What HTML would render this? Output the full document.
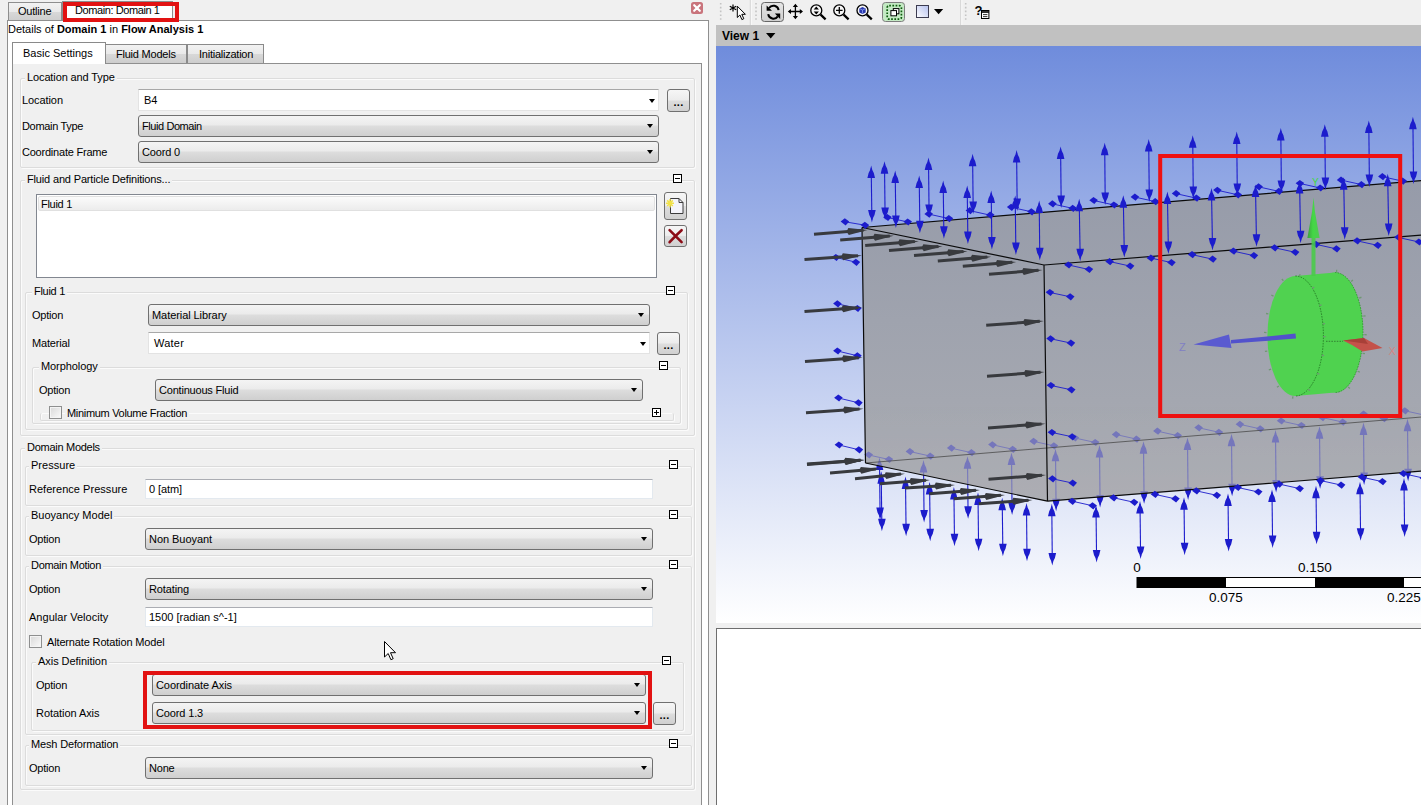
<!DOCTYPE html>
<html><head><meta charset="utf-8"><title>Domain 1</title>
<style>
html,body{margin:0;padding:0}
body{width:1421px;height:805px;overflow:hidden;background:#f0f0f0;position:relative;font-family:"Liberation Sans",sans-serif;font-size:11px;color:#000}
.a{position:absolute;box-sizing:border-box}
.t{position:absolute;white-space:nowrap;line-height:13px;height:13px}
.cb{position:absolute;box-sizing:border-box;height:22px;border:1px solid #707070;border-radius:3px;background:linear-gradient(#f4f4f4 0,#ebebeb 45%,#dddddd 50%,#cfcfcf 100%);padding:0 0 0 3px;line-height:20px;white-space:nowrap}
.cb:after,.ce:after{content:"";position:absolute;right:5px;top:8px;border:3.6px solid transparent;border-top:4.2px solid #000;border-bottom:0}
.ce:after{right:3.5px;top:9px}
.ce{position:absolute;box-sizing:border-box;height:22px;border:1px solid #e3e3e3;border-top-color:#a8a8a8;background:#fff;padding:0 0 0 5px;line-height:20px;white-space:nowrap}
.in{position:absolute;box-sizing:border-box;height:20px;border:1px solid #e3e9ef;border-top-color:#abadb3;background:#fff;padding:0 0 0 3px;line-height:18px;white-space:nowrap}
.bt{position:absolute;box-sizing:border-box;border:1px solid #707070;border-radius:3px;background:linear-gradient(#f6f6f6 0,#ececec 48%,#dddddd 52%,#d0d0d0 100%);text-align:center;line-height:24px;font-weight:bold;letter-spacing:0.3px}
.gb{position:absolute;box-sizing:border-box;border:1px solid #dcdcdc;box-shadow:1px 1px 0 #fbfbfb inset, 1px 1px 0 #fbfbfb;border-radius:2px}
.gl{position:absolute;white-space:nowrap;line-height:13px;height:13px;background:#f0f0f0;padding:0 2px}
.ic{position:absolute;box-sizing:border-box;width:9px;height:9px;border:1px solid #000;background:#fff;margin-left:1px}
.ic:before{content:"";position:absolute;left:1px;top:2.7px;width:5px;height:1.6px;background:#000}
.ic.p:after{content:"";position:absolute;left:2.7px;top:1px;width:1.6px;height:5px;background:#000}
.ck{position:absolute;box-sizing:border-box;width:13px;height:13px;border:1px solid #8e8f8f;background:linear-gradient(135deg,#d8d8d8,#fafafa);box-shadow:0 0 0 1px #f4f4f4 inset}
</style></head><body>
<!-- LEFT PANEL -->
<div id="left">
<div class="a" style="left:8px;top:2px;width:54px;height:19px;border:1px solid #8e8e8e;border-bottom:0;background:linear-gradient(#f2f2f2 0,#e9e9e9 50%,#d8d8d8 52%,#cdcdcd 100%)"></div>
<div class="t" style="left:18px;top:5px;letter-spacing:-0.21px">Outline</div>
<div class="a" style="left:7px;top:20px;width:702px;height:800px;border:1px solid #8f8f8f;background:#fff"></div>
<div class="a" style="left:62px;top:1px;width:111px;height:20px;border:1px solid #8e8e8e;border-bottom:0;background:#fff"></div>
<div class="t" style="left:75px;top:4px;letter-spacing:-0.41px">Domain: Domain 1</div>
<div class="a" style="left:63px;top:2px;width:116px;height:20px;border:4px solid #e21212"></div>
<div class="t" style="left:8px;top:23px">Details of <b>Domain 1</b> in <b>Flow Analysis 1</b></div>
<!-- inner tabs -->
<div class="a" style="left:12px;top:63px;width:690px;height:760px;border:1px solid #8f8f8f;background:#f0f0f0"></div>
<div class="a" style="left:12px;top:42px;width:94px;height:22px;border:1px solid #8a8a8a;border-bottom:0;background:#fff"></div>
<div class="t" style="left:23px;top:47px">Basic Settings</div>
<div class="a" style="left:105px;top:44px;width:82px;height:19px;border:1px solid #8a8a8a;border-bottom:0;background:linear-gradient(#f2f2f2 0,#e9e9e9 50%,#d8d8d8 52%,#cdcdcd 100%)"></div>
<div class="t" style="left:116px;top:48px;letter-spacing:-0.22px">Fluid Models</div>
<div class="a" style="left:187px;top:44px;width:77px;height:19px;border:1px solid #8a8a8a;border-bottom:0;background:linear-gradient(#f2f2f2 0,#e9e9e9 50%,#d8d8d8 52%,#cdcdcd 100%)"></div>
<div class="t" style="left:199px;top:48px;letter-spacing:-0.24px">Initialization</div>

<!-- form content -->
<div id="form">
<div class="gb" style="left:20px;top:78px;width:675px;height:90px"></div>
<div class="gl" style="left:25px;top:71px;letter-spacing:-0.12px">Location and Type</div>
<div class="t" style="left:22px;top:94px;letter-spacing:-0.08px">Location</div>
<div class="ce" style="left:138px;top:89px;width:521px">B4</div>
<div class="bt" style="left:667px;top:89px;width:23px;height:23px">...</div>
<div class="t" style="left:22px;top:120px;letter-spacing:-0.33px">Domain Type</div>
<div class="cb" style="left:138px;top:115px;width:521px;letter-spacing:-0.42px">Fluid Domain</div>
<div class="t" style="left:22px;top:146px;letter-spacing:-0.22px">Coordinate Frame</div>
<div class="cb" style="left:138px;top:141px;width:521px;letter-spacing:-0.16px">Coord 0</div>

<div class="gb" style="left:20px;top:180px;width:675px;height:256px"></div>
<div class="gl" style="left:25px;top:173px;letter-spacing:-0.16px">Fluid and Particle Definitions...</div>
<div class="ic" style="left:672px;top:174px"></div>
<div class="a" style="left:36px;top:194px;width:621px;height:84px;border:1px solid #828790;background:#fff"></div>
<div class="a" style="left:38px;top:196px;width:617px;height:15px;border:1px solid #e0e0e0;border-radius:2px;background:linear-gradient(#fbfbfb,#ececec)"></div>
<div class="t" style="left:41px;top:198px;letter-spacing:-0.29px">Fluid 1</div>
<div class="bt" style="left:664px;top:192px;width:23px;height:28px"></div>
<div class="bt" style="left:664px;top:225px;width:23px;height:22px"></div>
<svg class="a" style="left:664px;top:192px" width="24" height="56" viewBox="664 192 24 56">
<path d="M670.5 198.5h8.5l4 4v11h-12.5z" fill="#f4f4fa" stroke="#3c3c3c" stroke-width="1"/><path d="M679 198.5v4h4" fill="none" stroke="#3c3c3c" stroke-width="1"/>
<path d="M670 199v8.4M666 203.2h8M667.2 200.4l5.6 5.6M672.8 200.4l-5.6 5.6" stroke="#f2e24a" stroke-width="1.5"/>
<path d="M669.6 230.2l12 12M681.6 230.2c-4 3.6-8 7.6-12 12" stroke="#8c0c16" stroke-width="2.6" stroke-linecap="round" fill="none"/>
</svg>
<svg class="a" style="left:383px;top:640px" width="16" height="22" viewBox="0 0 16 22"><path d="M1.5 1.5v15.5l3.7-3.5l2.7 6.2l2.3-1l-2.7-6h5z" fill="#fff" stroke="#000" stroke-width="1"/></svg>


<div class="gb" style="left:25px;top:292px;width:663px;height:138px"></div>
<div class="gl" style="left:32px;top:285px;letter-spacing:-0.29px">Fluid 1</div>
<div class="ic" style="left:665px;top:286px"></div>
<div class="t" style="left:32px;top:309px;letter-spacing:-0.23px">Option</div>
<div class="cb" style="left:148px;top:304px;width:502px;letter-spacing:-0.07px">Material Library</div>
<div class="t" style="left:32px;top:337px;letter-spacing:-0.17px">Material</div>
<div class="ce" style="left:148px;top:332px;width:502px;letter-spacing:0.22px">Water</div>
<div class="bt" style="left:657px;top:332px;width:23px;height:23px">...</div>

<div class="gb" style="left:32px;top:367px;width:649px;height:57px"></div>
<div class="gl" style="left:39px;top:360px;letter-spacing:-0.08px">Morphology</div>
<div class="ic" style="left:658px;top:361px"></div>
<div class="t" style="left:39px;top:384px;letter-spacing:-0.23px">Option</div>
<div class="cb" style="left:155px;top:379px;width:488px;letter-spacing:-0.2px">Continuous Fluid</div>
<div class="gb" style="left:40px;top:413px;width:634px;height:8px;border-top:0"></div>
<div class="ck" style="left:49px;top:406px"></div>
<div class="gl" style="left:65px;top:407px;letter-spacing:-0.31px">Minimum Volume Fraction</div>
<div class="ic p" style="left:651px;top:408px"></div>

<div class="gb" style="left:20px;top:448px;width:675px;height:342px"></div>
<div class="gl" style="left:25px;top:441px;letter-spacing:-0.28px">Domain Models</div>

<div class="gb" style="left:25px;top:466px;width:667px;height:40px"></div>
<div class="gl" style="left:29px;top:459px;letter-spacing:0.03px">Pressure</div>
<div class="ic" style="left:668px;top:460px"></div>
<div class="t" style="left:29px;top:483px;letter-spacing:0.03px">Reference Pressure</div>
<div class="in" style="left:145px;top:479px;width:508px;letter-spacing:-0.09px">0 [atm]</div>

<div class="gb" style="left:25px;top:516px;width:667px;height:40px"></div>
<div class="gl" style="left:29px;top:509px">Buoyancy Model</div>
<div class="ic" style="left:668px;top:510px"></div>
<div class="t" style="left:29px;top:533px;letter-spacing:-0.23px">Option</div>
<div class="cb" style="left:145px;top:528px;width:508px;letter-spacing:-0.05px">Non Buoyant</div>

<div class="gb" style="left:25px;top:566px;width:667px;height:169px"></div>
<div class="gl" style="left:29px;top:559px;letter-spacing:-0.31px">Domain Motion</div>
<div class="ic" style="left:668px;top:560px"></div>
<div class="t" style="left:29px;top:583px;letter-spacing:-0.23px">Option</div>
<div class="cb" style="left:145px;top:578px;width:508px;letter-spacing:-0.12px">Rotating</div>
<div class="t" style="left:29px;top:611px;letter-spacing:0.03px">Angular Velocity</div>
<div class="in" style="left:145px;top:607px;width:508px">1500 [radian s^-1]</div>
<div class="ck" style="left:29px;top:635px"></div>
<div class="t" style="left:47px;top:636px;letter-spacing:-0.15px">Alternate Rotation Model</div>

<div class="gb" style="left:31px;top:662px;width:653px;height:69px"></div>
<div class="gl" style="left:36px;top:655px;letter-spacing:-0.05px">Axis Definition</div>
<div class="ic" style="left:661px;top:656px"></div>
<div class="t" style="left:36px;top:679px;letter-spacing:-0.23px">Option</div>
<div class="cb" style="left:152px;top:674px;width:494px;letter-spacing:-0.07px">Coordinate Axis</div>
<div class="t" style="left:36px;top:707px;letter-spacing:-0.06px">Rotation Axis</div>
<div class="cb" style="left:152px;top:702px;width:494px;letter-spacing:-0.14px">Coord 1.3</div>
<div class="bt" style="left:653px;top:702px;width:23px;height:23px">...</div>
<div class="a" style="left:143px;top:671px;width:509px;height:58px;border:4px solid #e21212"></div>

<div class="gb" style="left:25px;top:745px;width:667px;height:41px"></div>
<div class="gl" style="left:29px;top:738px;letter-spacing:-0.16px">Mesh Deformation</div>
<div class="ic" style="left:668px;top:739px"></div>
<div class="t" style="left:29px;top:762px;letter-spacing:-0.23px">Option</div>
<div class="cb" style="left:145px;top:757px;width:508px;letter-spacing:-0.2px">None</div>
</div>
</div>
<!-- RIGHT -->
<div id="right">
<!--TOOLBAR-->
<svg class="a" style="left:690px;top:0" width="320" height="25" viewBox="690 0 320 25">
<defs><linearGradient id="tg1" x1="0" y1="0" x2="0" y2="1"><stop offset="0" stop-color="#e6e6e6"/><stop offset="1" stop-color="#cfcfcf"/></linearGradient>
<linearGradient id="tg2" x1="0" y1="1" x2="1" y2="0"><stop offset="0" stop-color="#ffffff"/><stop offset="1" stop-color="#b4c0ee"/></linearGradient></defs>
<!-- close -->
<rect x="691" y="2" width="12" height="12" rx="2.5" fill="#c9747c"/><path d="M694.2 5.2l5.6 5.6M699.8 5.2l-5.6 5.6" stroke="#fff" stroke-width="2.2" stroke-linecap="round"/>
<!-- handles -->
<path d="M720.7 3v18M756 3v18M965.7 3v18" stroke="#c4c4c4" stroke-width="1.6" stroke-dasharray="1.6 2.2"/>
<path d="M750.3 0v25M960.8 0v25" stroke="#cfcfcf" stroke-width="1"/><path d="M751.3 0v25M961.8 0v25" stroke="#fafafa" stroke-width="1"/>
<!-- select icon -->
<path d="M733 4.6v6.8M729.8 6.3l6.4 3.4M736.2 6.3l-6.4 3.4" stroke="#000" stroke-width="1.2"/>
<path d="M737.3 6.2v11.3l2.6-2.5l2 4.6l1.9-0.9l-2-4.4h3.6z" fill="#fff" stroke="#000" stroke-width="1"/>
<!-- rotate button -->
<rect x="761.5" y="2.5" width="22" height="19" rx="3" fill="url(#tg1)" stroke="#666" stroke-width="1"/>
<path d="M778.6 10.2a5.3 5.3 0 0 0 -9.6 -2.2" fill="none" stroke="#000" stroke-width="2"/><path d="M766.6 5.4v5.4h5.4z" fill="#000"/>
<path d="M768.2 14.2a5.3 5.3 0 0 0 9.6 2.2" fill="none" stroke="#000" stroke-width="2"/><path d="M780.2 19v-5.4h-5.4z" fill="#000"/>
<!-- move icon -->
<path d="M795.4 5.5v12M789.4 11.5h12" stroke="#000" stroke-width="1.3"/>
<path d="M795.4 3.8l2.6 3.2h-5.2zM795.4 19.2l2.6-3.2h-5.2zM787.8 11.5l3.2-2.6v5.2zM803 11.5l-3.2-2.6v5.2z" fill="#000"/>
<!-- zoom icons -->
<g fill="none" stroke="#000"><circle cx="816.3" cy="10.4" r="5.5" stroke-width="1.3" fill="#f6f6f6"/><path d="M820.6 14.6l5 4.8" stroke-width="2.2"/>
<circle cx="839.3" cy="10.4" r="5.5" stroke-width="1.3" fill="#f6f6f6"/><path d="M843.6 14.6l5 4.8" stroke-width="2.2"/>
<circle cx="862.5" cy="10.4" r="5.5" stroke-width="1.3" fill="#f6f6f6"/><path d="M866.8 14.6l5 4.8" stroke-width="2.2"/>
<path d="M836 10.4h6.6M839.3 7.1v6.6" stroke-width="1.3"/></g>
<path d="M816.3 6.6l2.6 3h-5.2zM816.3 14.4l2.6-3h-5.2z" fill="#000"/>
<path d="M859.3 8.6l3.2-1.6l3.2 1.6v3.8l-3.2 1.6l-3.2-1.6z" fill="#2a3ab0"/><path d="M859.9 8.8l2.6 1.2l2.6-1.2M862.5 10v3.4" stroke="#8ea0f0" stroke-width="0.8" fill="none"/>
<!-- fit button -->
<rect x="882.5" y="2.5" width="22" height="19" rx="3" fill="#c4eac4" stroke="#7d7d7d" stroke-width="1"/>
<rect x="887.2" y="5.6" width="14.2" height="13.6" rx="2" fill="none" stroke="#0c5c0c" stroke-width="1.7" stroke-dasharray="1.7 1.5"/>
<rect x="893.3" y="8.6" width="5.6" height="5.2" fill="#fff" stroke="#000" stroke-width="1"/><rect x="890.9" y="10.6" width="5.6" height="5.2" fill="#fff" stroke="#000" stroke-width="1"/>
<!-- colour -->
<rect x="916.5" y="5.5" width="12" height="12" fill="url(#tg2)" stroke="#3c3c50" stroke-width="1"/>
<path d="M934 9h9.2l-4.6 5.2z" fill="#000"/>
<!-- help -->
<text x="974.5" y="14.6" font-size="13" font-weight="bold" font-family="Liberation Sans, sans-serif" fill="#000">?</text>
<rect x="981.5" y="10.5" width="7.4" height="8" fill="#fff" stroke="#000" stroke-width="1"/><path d="M981.5 12h7.4" stroke="#000" stroke-width="1.6"/><path d="M983 14.6h4.4M983 16.6h4.4" stroke="#000" stroke-width="0.8"/>
</svg>
<!--/TOOLBAR-->

<div class="a" style="left:716px;top:25px;width:705px;height:21px;background:#c1c1c1"></div>
<div class="t" style="left:722px;top:30px;font-size:12px;font-weight:bold">View 1</div>
<svg class="a" style="left:765px;top:32px" width="12" height="8" viewBox="0 0 12 8"><path d="M1 1h9.4l-4.7 5.6z" fill="#000"/></svg>

<div class="a" style="left:716px;top:46px;width:705px;height:577px;background:linear-gradient(#6f8cdc 0,#ffffff 100%)"></div>
<!--SVG3D--><svg class="a" style="left:716px;top:46px" width="705" height="577" viewBox="716 46 705 577">
<defs><clipPath id="boxclip"><polygon points="862,227.5 1421.5,180.5 1421.5,471 1047.5,501.2 865.5,463"/></clipPath>
<linearGradient id="gf" gradientUnits="userSpaceOnUse" x1="0" y1="180" x2="0" y2="500"><stop offset="0" stop-color="#969ba9"/><stop offset="0.44" stop-color="#9fa3ae"/><stop offset="0.69" stop-color="#a4a7b0"/><stop offset="1" stop-color="#adaeb3"/></linearGradient>
<linearGradient id="gy" x1="0" y1="0" x2="1" y2="0"><stop offset="0" stop-color="#2fa030"/><stop offset="0.45" stop-color="#38e038"/><stop offset="1" stop-color="#48d048"/></linearGradient>
</defs>
<g><path d="M879.5 460.5L880.1 517" stroke="#1c1ccc" stroke-width="1.1" fill="none"/><path d="M879.5 457.5l1.1 4.4l1.5 3l1.2 5.1h-7.6l1.2 -5.1l1.5 -3z" fill="#1c1ccc"/><path d="M880.1 520l1.1 -4.4l1.5 -3l1.2 -5.1h-7.6l1.2 5.1l1.5 3z" fill="#1c1ccc"/><path d="M923.5 463L924.1 519.5" stroke="#1c1ccc" stroke-width="1.1" fill="none"/><path d="M923.5 460l1.1 4.4l1.5 3l1.2 5.1h-7.6l1.2 -5.1l1.5 -3z" fill="#1c1ccc"/><path d="M924.1 522.5l1.1 -4.4l1.5 -3l1.2 -5.1h-7.6l1.2 5.1l1.5 3z" fill="#1c1ccc"/><path d="M967.5 459.2L968.1 515.8" stroke="#1c1ccc" stroke-width="1.1" fill="none"/><path d="M967.5 456.2l1.1 4.4l1.5 3l1.2 5.1h-7.6l1.2 -5.1l1.5 -3z" fill="#1c1ccc"/><path d="M968.1 518.8l1.1 -4.4l1.5 -3l1.2 -5.1h-7.6l1.2 5.1l1.5 3z" fill="#1c1ccc"/><path d="M1011.5 455.5L1012.1 512" stroke="#1c1ccc" stroke-width="1.1" fill="none"/><path d="M1011.5 452.5l1.1 4.4l1.5 3l1.2 5.1h-7.6l1.2 -5.1l1.5 -3z" fill="#1c1ccc"/><path d="M1012.1 515l1.1 -4.4l1.5 -3l1.2 -5.1h-7.6l1.2 5.1l1.5 3z" fill="#1c1ccc"/><path d="M1055.5 451.8L1056.1 508.2" stroke="#1c1ccc" stroke-width="1.1" fill="none"/><path d="M1055.5 448.8l1.1 4.4l1.5 3l1.2 5.1h-7.6l1.2 -5.1l1.5 -3z" fill="#1c1ccc"/><path d="M1056.1 511.2l1.1 -4.4l1.5 -3l1.2 -5.1h-7.6l1.2 5.1l1.5 3z" fill="#1c1ccc"/><path d="M1099.5 448L1100.1 504.5" stroke="#1c1ccc" stroke-width="1.1" fill="none"/><path d="M1099.5 445l1.1 4.4l1.5 3l1.2 5.1h-7.6l1.2 -5.1l1.5 -3z" fill="#1c1ccc"/><path d="M1100.1 507.5l1.1 -4.4l1.5 -3l1.2 -5.1h-7.6l1.2 5.1l1.5 3z" fill="#1c1ccc"/><path d="M1143.5 444.2L1144.1 500.8" stroke="#1c1ccc" stroke-width="1.1" fill="none"/><path d="M1143.5 441.2l1.1 4.4l1.5 3l1.2 5.1h-7.6l1.2 -5.1l1.5 -3z" fill="#1c1ccc"/><path d="M1144.1 503.8l1.1 -4.4l1.5 -3l1.2 -5.1h-7.6l1.2 5.1l1.5 3z" fill="#1c1ccc"/><path d="M1187.5 440.5L1188.1 497" stroke="#1c1ccc" stroke-width="1.1" fill="none"/><path d="M1187.5 437.5l1.1 4.4l1.5 3l1.2 5.1h-7.6l1.2 -5.1l1.5 -3z" fill="#1c1ccc"/><path d="M1188.1 500l1.1 -4.4l1.5 -3l1.2 -5.1h-7.6l1.2 5.1l1.5 3z" fill="#1c1ccc"/><path d="M1231.5 436.8L1232.1 493.2" stroke="#1c1ccc" stroke-width="1.1" fill="none"/><path d="M1231.5 433.8l1.1 4.4l1.5 3l1.2 5.1h-7.6l1.2 -5.1l1.5 -3z" fill="#1c1ccc"/><path d="M1232.1 496.2l1.1 -4.4l1.5 -3l1.2 -5.1h-7.6l1.2 5.1l1.5 3z" fill="#1c1ccc"/><path d="M1275.5 433L1276.1 489.5" stroke="#1c1ccc" stroke-width="1.1" fill="none"/><path d="M1275.5 430l1.1 4.4l1.5 3l1.2 5.1h-7.6l1.2 -5.1l1.5 -3z" fill="#1c1ccc"/><path d="M1276.1 492.5l1.1 -4.4l1.5 -3l1.2 -5.1h-7.6l1.2 5.1l1.5 3z" fill="#1c1ccc"/><path d="M1319.5 429.2L1320.1 485.8" stroke="#1c1ccc" stroke-width="1.1" fill="none"/><path d="M1319.5 426.2l1.1 4.4l1.5 3l1.2 5.1h-7.6l1.2 -5.1l1.5 -3z" fill="#1c1ccc"/><path d="M1320.1 488.8l1.1 -4.4l1.5 -3l1.2 -5.1h-7.6l1.2 5.1l1.5 3z" fill="#1c1ccc"/><path d="M1363.5 425.5L1364.1 482" stroke="#1c1ccc" stroke-width="1.1" fill="none"/><path d="M1363.5 422.5l1.1 4.4l1.5 3l1.2 5.1h-7.6l1.2 -5.1l1.5 -3z" fill="#1c1ccc"/><path d="M1364.1 485l1.1 -4.4l1.5 -3l1.2 -5.1h-7.6l1.2 5.1l1.5 3z" fill="#1c1ccc"/><path d="M1407.5 421.8L1408.1 478.2" stroke="#1c1ccc" stroke-width="1.1" fill="none"/><path d="M1407.5 418.8l1.1 4.4l1.5 3l1.2 5.1h-7.6l1.2 -5.1l1.5 -3z" fill="#1c1ccc"/><path d="M1408.1 481.2l1.1 -4.4l1.5 -3l1.2 -5.1h-7.6l1.2 5.1l1.5 3z" fill="#1c1ccc"/></g><g><path d="M868.8 455L889 459.5" stroke="#1c1ccc" stroke-width="0.9" fill="none"/><path d="M864.4 454.8l4.2 -3.4l4.4 3.2l-3.6 4z" fill="#1c1ccc"/><path d="M884.6 459.3l4.2 -3.4l4.4 3.2l-3.6 4z" fill="#1c1ccc"/><path d="M910 451.6L930.3 456.1" stroke="#1c1ccc" stroke-width="0.9" fill="none"/><path d="M905.6 451.4l4.2 -3.4l4.4 3.2l-3.6 4z" fill="#1c1ccc"/><path d="M925.9 455.9l4.2 -3.4l4.4 3.2l-3.6 4z" fill="#1c1ccc"/><path d="M951.2 448.2L971.5 452.7" stroke="#1c1ccc" stroke-width="0.9" fill="none"/><path d="M946.9 448l4.2 -3.4l4.4 3.2l-3.6 4z" fill="#1c1ccc"/><path d="M967.1 452.5l4.2 -3.4l4.4 3.2l-3.6 4z" fill="#1c1ccc"/><path d="M992.5 444.8L1012.8 449.3" stroke="#1c1ccc" stroke-width="0.9" fill="none"/><path d="M988.1 444.6l4.2 -3.4l4.4 3.2l-3.6 4z" fill="#1c1ccc"/><path d="M1008.4 449.1l4.2 -3.4l4.4 3.2l-3.6 4z" fill="#1c1ccc"/><path d="M1033.8 441.4L1054 445.9" stroke="#1c1ccc" stroke-width="0.9" fill="none"/><path d="M1029.3 441.2l4.2 -3.4l4.4 3.2l-3.6 4z" fill="#1c1ccc"/><path d="M1049.6 445.7l4.2 -3.4l4.4 3.2l-3.6 4z" fill="#1c1ccc"/><path d="M1075 438L1095.3 442.5" stroke="#1c1ccc" stroke-width="0.9" fill="none"/><path d="M1070.6 437.8l4.2 -3.4l4.4 3.2l-3.6 4z" fill="#1c1ccc"/><path d="M1090.9 442.3l4.2 -3.4l4.4 3.2l-3.6 4z" fill="#1c1ccc"/><path d="M1116.2 434.6L1136.5 439.1" stroke="#1c1ccc" stroke-width="0.9" fill="none"/><path d="M1111.8 434.4l4.2 -3.4l4.4 3.2l-3.6 4z" fill="#1c1ccc"/><path d="M1132.1 438.9l4.2 -3.4l4.4 3.2l-3.6 4z" fill="#1c1ccc"/><path d="M1157.5 431.2L1177.8 435.7" stroke="#1c1ccc" stroke-width="0.9" fill="none"/><path d="M1153.1 431l4.2 -3.4l4.4 3.2l-3.6 4z" fill="#1c1ccc"/><path d="M1173.4 435.5l4.2 -3.4l4.4 3.2l-3.6 4z" fill="#1c1ccc"/><path d="M1198.8 427.8L1219 432.3" stroke="#1c1ccc" stroke-width="0.9" fill="none"/><path d="M1194.3 427.6l4.2 -3.4l4.4 3.2l-3.6 4z" fill="#1c1ccc"/><path d="M1214.6 432.1l4.2 -3.4l4.4 3.2l-3.6 4z" fill="#1c1ccc"/><path d="M1240 424.4L1260.3 428.9" stroke="#1c1ccc" stroke-width="0.9" fill="none"/><path d="M1235.6 424.2l4.2 -3.4l4.4 3.2l-3.6 4z" fill="#1c1ccc"/><path d="M1255.9 428.7l4.2 -3.4l4.4 3.2l-3.6 4z" fill="#1c1ccc"/><path d="M1281.2 421L1301.5 425.5" stroke="#1c1ccc" stroke-width="0.9" fill="none"/><path d="M1276.8 420.8l4.2 -3.4l4.4 3.2l-3.6 4z" fill="#1c1ccc"/><path d="M1297.1 425.3l4.2 -3.4l4.4 3.2l-3.6 4z" fill="#1c1ccc"/><path d="M1322.5 417.6L1342.8 422.1" stroke="#1c1ccc" stroke-width="0.9" fill="none"/><path d="M1318.1 417.4l4.2 -3.4l4.4 3.2l-3.6 4z" fill="#1c1ccc"/><path d="M1338.4 421.9l4.2 -3.4l4.4 3.2l-3.6 4z" fill="#1c1ccc"/><path d="M1363.8 414.2L1384 418.7" stroke="#1c1ccc" stroke-width="0.9" fill="none"/><path d="M1359.3 414l4.2 -3.4l4.4 3.2l-3.6 4z" fill="#1c1ccc"/><path d="M1379.6 418.5l4.2 -3.4l4.4 3.2l-3.6 4z" fill="#1c1ccc"/><path d="M1405 410.8L1425.3 415.3" stroke="#1c1ccc" stroke-width="0.9" fill="none"/><path d="M1400.6 410.6l4.2 -3.4l4.4 3.2l-3.6 4z" fill="#1c1ccc"/><path d="M1420.9 415.1l4.2 -3.4l4.4 3.2l-3.6 4z" fill="#1c1ccc"/></g>
<polygon points="862,227.5 1421.5,180.5 1421.5,235 1044,265" fill="url(#gf)"/>
<polygon points="1044,265 1421.5,235 1421.5,471 1047.5,501.2" fill="url(#gf)"/>
<polygon points="862,227.5 1044,265 1047.5,501.2 865.5,463" fill="url(#gf)"/>
<g clip-path="url(#boxclip)" opacity="0.36"><path d="M879.5 460.5L880.1 517" stroke="#1c1ccc" stroke-width="1.1" fill="none"/><path d="M879.5 457.5l1.1 4.4l1.5 3l1.2 5.1h-7.6l1.2 -5.1l1.5 -3z" fill="#1c1ccc"/><path d="M880.1 520l1.1 -4.4l1.5 -3l1.2 -5.1h-7.6l1.2 5.1l1.5 3z" fill="#1c1ccc"/><path d="M923.5 463L924.1 519.5" stroke="#1c1ccc" stroke-width="1.1" fill="none"/><path d="M923.5 460l1.1 4.4l1.5 3l1.2 5.1h-7.6l1.2 -5.1l1.5 -3z" fill="#1c1ccc"/><path d="M924.1 522.5l1.1 -4.4l1.5 -3l1.2 -5.1h-7.6l1.2 5.1l1.5 3z" fill="#1c1ccc"/><path d="M967.5 459.2L968.1 515.8" stroke="#1c1ccc" stroke-width="1.1" fill="none"/><path d="M967.5 456.2l1.1 4.4l1.5 3l1.2 5.1h-7.6l1.2 -5.1l1.5 -3z" fill="#1c1ccc"/><path d="M968.1 518.8l1.1 -4.4l1.5 -3l1.2 -5.1h-7.6l1.2 5.1l1.5 3z" fill="#1c1ccc"/><path d="M1011.5 455.5L1012.1 512" stroke="#1c1ccc" stroke-width="1.1" fill="none"/><path d="M1011.5 452.5l1.1 4.4l1.5 3l1.2 5.1h-7.6l1.2 -5.1l1.5 -3z" fill="#1c1ccc"/><path d="M1012.1 515l1.1 -4.4l1.5 -3l1.2 -5.1h-7.6l1.2 5.1l1.5 3z" fill="#1c1ccc"/><path d="M1055.5 451.8L1056.1 508.2" stroke="#1c1ccc" stroke-width="1.1" fill="none"/><path d="M1055.5 448.8l1.1 4.4l1.5 3l1.2 5.1h-7.6l1.2 -5.1l1.5 -3z" fill="#1c1ccc"/><path d="M1056.1 511.2l1.1 -4.4l1.5 -3l1.2 -5.1h-7.6l1.2 5.1l1.5 3z" fill="#1c1ccc"/><path d="M1099.5 448L1100.1 504.5" stroke="#1c1ccc" stroke-width="1.1" fill="none"/><path d="M1099.5 445l1.1 4.4l1.5 3l1.2 5.1h-7.6l1.2 -5.1l1.5 -3z" fill="#1c1ccc"/><path d="M1100.1 507.5l1.1 -4.4l1.5 -3l1.2 -5.1h-7.6l1.2 5.1l1.5 3z" fill="#1c1ccc"/><path d="M1143.5 444.2L1144.1 500.8" stroke="#1c1ccc" stroke-width="1.1" fill="none"/><path d="M1143.5 441.2l1.1 4.4l1.5 3l1.2 5.1h-7.6l1.2 -5.1l1.5 -3z" fill="#1c1ccc"/><path d="M1144.1 503.8l1.1 -4.4l1.5 -3l1.2 -5.1h-7.6l1.2 5.1l1.5 3z" fill="#1c1ccc"/><path d="M1187.5 440.5L1188.1 497" stroke="#1c1ccc" stroke-width="1.1" fill="none"/><path d="M1187.5 437.5l1.1 4.4l1.5 3l1.2 5.1h-7.6l1.2 -5.1l1.5 -3z" fill="#1c1ccc"/><path d="M1188.1 500l1.1 -4.4l1.5 -3l1.2 -5.1h-7.6l1.2 5.1l1.5 3z" fill="#1c1ccc"/><path d="M1231.5 436.8L1232.1 493.2" stroke="#1c1ccc" stroke-width="1.1" fill="none"/><path d="M1231.5 433.8l1.1 4.4l1.5 3l1.2 5.1h-7.6l1.2 -5.1l1.5 -3z" fill="#1c1ccc"/><path d="M1232.1 496.2l1.1 -4.4l1.5 -3l1.2 -5.1h-7.6l1.2 5.1l1.5 3z" fill="#1c1ccc"/><path d="M1275.5 433L1276.1 489.5" stroke="#1c1ccc" stroke-width="1.1" fill="none"/><path d="M1275.5 430l1.1 4.4l1.5 3l1.2 5.1h-7.6l1.2 -5.1l1.5 -3z" fill="#1c1ccc"/><path d="M1276.1 492.5l1.1 -4.4l1.5 -3l1.2 -5.1h-7.6l1.2 5.1l1.5 3z" fill="#1c1ccc"/><path d="M1319.5 429.2L1320.1 485.8" stroke="#1c1ccc" stroke-width="1.1" fill="none"/><path d="M1319.5 426.2l1.1 4.4l1.5 3l1.2 5.1h-7.6l1.2 -5.1l1.5 -3z" fill="#1c1ccc"/><path d="M1320.1 488.8l1.1 -4.4l1.5 -3l1.2 -5.1h-7.6l1.2 5.1l1.5 3z" fill="#1c1ccc"/><path d="M1363.5 425.5L1364.1 482" stroke="#1c1ccc" stroke-width="1.1" fill="none"/><path d="M1363.5 422.5l1.1 4.4l1.5 3l1.2 5.1h-7.6l1.2 -5.1l1.5 -3z" fill="#1c1ccc"/><path d="M1364.1 485l1.1 -4.4l1.5 -3l1.2 -5.1h-7.6l1.2 5.1l1.5 3z" fill="#1c1ccc"/><path d="M1407.5 421.8L1408.1 478.2" stroke="#1c1ccc" stroke-width="1.1" fill="none"/><path d="M1407.5 418.8l1.1 4.4l1.5 3l1.2 5.1h-7.6l1.2 -5.1l1.5 -3z" fill="#1c1ccc"/><path d="M1408.1 481.2l1.1 -4.4l1.5 -3l1.2 -5.1h-7.6l1.2 5.1l1.5 3z" fill="#1c1ccc"/><path d="M868.8 455L889 459.5" stroke="#1c1ccc" stroke-width="0.9" fill="none"/><path d="M864.4 454.8l4.2 -3.4l4.4 3.2l-3.6 4z" fill="#1c1ccc"/><path d="M884.6 459.3l4.2 -3.4l4.4 3.2l-3.6 4z" fill="#1c1ccc"/><path d="M910 451.6L930.3 456.1" stroke="#1c1ccc" stroke-width="0.9" fill="none"/><path d="M905.6 451.4l4.2 -3.4l4.4 3.2l-3.6 4z" fill="#1c1ccc"/><path d="M925.9 455.9l4.2 -3.4l4.4 3.2l-3.6 4z" fill="#1c1ccc"/><path d="M951.2 448.2L971.5 452.7" stroke="#1c1ccc" stroke-width="0.9" fill="none"/><path d="M946.9 448l4.2 -3.4l4.4 3.2l-3.6 4z" fill="#1c1ccc"/><path d="M967.1 452.5l4.2 -3.4l4.4 3.2l-3.6 4z" fill="#1c1ccc"/><path d="M992.5 444.8L1012.8 449.3" stroke="#1c1ccc" stroke-width="0.9" fill="none"/><path d="M988.1 444.6l4.2 -3.4l4.4 3.2l-3.6 4z" fill="#1c1ccc"/><path d="M1008.4 449.1l4.2 -3.4l4.4 3.2l-3.6 4z" fill="#1c1ccc"/><path d="M1033.8 441.4L1054 445.9" stroke="#1c1ccc" stroke-width="0.9" fill="none"/><path d="M1029.3 441.2l4.2 -3.4l4.4 3.2l-3.6 4z" fill="#1c1ccc"/><path d="M1049.6 445.7l4.2 -3.4l4.4 3.2l-3.6 4z" fill="#1c1ccc"/><path d="M1075 438L1095.3 442.5" stroke="#1c1ccc" stroke-width="0.9" fill="none"/><path d="M1070.6 437.8l4.2 -3.4l4.4 3.2l-3.6 4z" fill="#1c1ccc"/><path d="M1090.9 442.3l4.2 -3.4l4.4 3.2l-3.6 4z" fill="#1c1ccc"/><path d="M1116.2 434.6L1136.5 439.1" stroke="#1c1ccc" stroke-width="0.9" fill="none"/><path d="M1111.8 434.4l4.2 -3.4l4.4 3.2l-3.6 4z" fill="#1c1ccc"/><path d="M1132.1 438.9l4.2 -3.4l4.4 3.2l-3.6 4z" fill="#1c1ccc"/><path d="M1157.5 431.2L1177.8 435.7" stroke="#1c1ccc" stroke-width="0.9" fill="none"/><path d="M1153.1 431l4.2 -3.4l4.4 3.2l-3.6 4z" fill="#1c1ccc"/><path d="M1173.4 435.5l4.2 -3.4l4.4 3.2l-3.6 4z" fill="#1c1ccc"/><path d="M1198.8 427.8L1219 432.3" stroke="#1c1ccc" stroke-width="0.9" fill="none"/><path d="M1194.3 427.6l4.2 -3.4l4.4 3.2l-3.6 4z" fill="#1c1ccc"/><path d="M1214.6 432.1l4.2 -3.4l4.4 3.2l-3.6 4z" fill="#1c1ccc"/><path d="M1240 424.4L1260.3 428.9" stroke="#1c1ccc" stroke-width="0.9" fill="none"/><path d="M1235.6 424.2l4.2 -3.4l4.4 3.2l-3.6 4z" fill="#1c1ccc"/><path d="M1255.9 428.7l4.2 -3.4l4.4 3.2l-3.6 4z" fill="#1c1ccc"/><path d="M1281.2 421L1301.5 425.5" stroke="#1c1ccc" stroke-width="0.9" fill="none"/><path d="M1276.8 420.8l4.2 -3.4l4.4 3.2l-3.6 4z" fill="#1c1ccc"/><path d="M1297.1 425.3l4.2 -3.4l4.4 3.2l-3.6 4z" fill="#1c1ccc"/><path d="M1322.5 417.6L1342.8 422.1" stroke="#1c1ccc" stroke-width="0.9" fill="none"/><path d="M1318.1 417.4l4.2 -3.4l4.4 3.2l-3.6 4z" fill="#1c1ccc"/><path d="M1338.4 421.9l4.2 -3.4l4.4 3.2l-3.6 4z" fill="#1c1ccc"/><path d="M1363.8 414.2L1384 418.7" stroke="#1c1ccc" stroke-width="0.9" fill="none"/><path d="M1359.3 414l4.2 -3.4l4.4 3.2l-3.6 4z" fill="#1c1ccc"/><path d="M1379.6 418.5l4.2 -3.4l4.4 3.2l-3.6 4z" fill="#1c1ccc"/><path d="M1405 410.8L1425.3 415.3" stroke="#1c1ccc" stroke-width="0.9" fill="none"/><path d="M1400.6 410.6l4.2 -3.4l4.4 3.2l-3.6 4z" fill="#1c1ccc"/><path d="M1420.9 415.1l4.2 -3.4l4.4 3.2l-3.6 4z" fill="#1c1ccc"/></g>
<path d="M865.5 463L1421.5 417" stroke="#4a4a4a" stroke-width="0.8" fill="none"/>
<path d="M862 227.5L1421.5 180.5M1044 265L1421.5 235M1047.5 501.2L1421.5 471M862 227.5L1044 265M1044 265L1047.5 501.2M1047.5 501.2L865.5 463M865.5 463L862 227.5" stroke="#0a0a0a" stroke-width="1.2" fill="none"/>
<path d="M887.5 217.5L907.8 222" stroke="#1c1ccc" stroke-width="0.9" fill="none"/><path d="M883.1 217.3l4.2 -3.4l4.4 3.2l-3.6 4z" fill="#1c1ccc"/><path d="M903.4 221.8l4.2 -3.4l4.4 3.2l-3.6 4z" fill="#1c1ccc"/><path d="M928.8 214.1L949 218.6" stroke="#1c1ccc" stroke-width="0.9" fill="none"/><path d="M924.4 213.9l4.2 -3.4l4.4 3.2l-3.6 4z" fill="#1c1ccc"/><path d="M944.6 218.4l4.2 -3.4l4.4 3.2l-3.6 4z" fill="#1c1ccc"/><path d="M970 210.7L990.3 215.2" stroke="#1c1ccc" stroke-width="0.9" fill="none"/><path d="M965.6 210.5l4.2 -3.4l4.4 3.2l-3.6 4z" fill="#1c1ccc"/><path d="M985.9 215l4.2 -3.4l4.4 3.2l-3.6 4z" fill="#1c1ccc"/><path d="M1011.2 207.3L1031.5 211.8" stroke="#1c1ccc" stroke-width="0.9" fill="none"/><path d="M1006.9 207.1l4.2 -3.4l4.4 3.2l-3.6 4z" fill="#1c1ccc"/><path d="M1027.1 211.6l4.2 -3.4l4.4 3.2l-3.6 4z" fill="#1c1ccc"/><path d="M1052.5 203.9L1072.8 208.4" stroke="#1c1ccc" stroke-width="0.9" fill="none"/><path d="M1048.1 203.7l4.2 -3.4l4.4 3.2l-3.6 4z" fill="#1c1ccc"/><path d="M1068.4 208.2l4.2 -3.4l4.4 3.2l-3.6 4z" fill="#1c1ccc"/><path d="M1093.8 200.5L1114 205" stroke="#1c1ccc" stroke-width="0.9" fill="none"/><path d="M1089.3 200.3l4.2 -3.4l4.4 3.2l-3.6 4z" fill="#1c1ccc"/><path d="M1109.6 204.8l4.2 -3.4l4.4 3.2l-3.6 4z" fill="#1c1ccc"/><path d="M1135 197.1L1155.3 201.6" stroke="#1c1ccc" stroke-width="0.9" fill="none"/><path d="M1130.6 196.9l4.2 -3.4l4.4 3.2l-3.6 4z" fill="#1c1ccc"/><path d="M1150.9 201.4l4.2 -3.4l4.4 3.2l-3.6 4z" fill="#1c1ccc"/><path d="M1176.2 193.7L1196.5 198.2" stroke="#1c1ccc" stroke-width="0.9" fill="none"/><path d="M1171.8 193.5l4.2 -3.4l4.4 3.2l-3.6 4z" fill="#1c1ccc"/><path d="M1192.1 198l4.2 -3.4l4.4 3.2l-3.6 4z" fill="#1c1ccc"/><path d="M1217.5 190.3L1237.8 194.8" stroke="#1c1ccc" stroke-width="0.9" fill="none"/><path d="M1213.1 190.1l4.2 -3.4l4.4 3.2l-3.6 4z" fill="#1c1ccc"/><path d="M1233.4 194.6l4.2 -3.4l4.4 3.2l-3.6 4z" fill="#1c1ccc"/><path d="M1258.8 186.9L1279 191.4" stroke="#1c1ccc" stroke-width="0.9" fill="none"/><path d="M1254.3 186.7l4.2 -3.4l4.4 3.2l-3.6 4z" fill="#1c1ccc"/><path d="M1274.6 191.2l4.2 -3.4l4.4 3.2l-3.6 4z" fill="#1c1ccc"/><path d="M1300 183.5L1320.3 188" stroke="#1c1ccc" stroke-width="0.9" fill="none"/><path d="M1295.6 183.3l4.2 -3.4l4.4 3.2l-3.6 4z" fill="#1c1ccc"/><path d="M1315.9 187.8l4.2 -3.4l4.4 3.2l-3.6 4z" fill="#1c1ccc"/><path d="M1341.2 180.1L1361.5 184.6" stroke="#1c1ccc" stroke-width="0.9" fill="none"/><path d="M1336.8 179.9l4.2 -3.4l4.4 3.2l-3.6 4z" fill="#1c1ccc"/><path d="M1357.1 184.4l4.2 -3.4l4.4 3.2l-3.6 4z" fill="#1c1ccc"/><path d="M1382.5 176.7L1402.8 181.2" stroke="#1c1ccc" stroke-width="0.9" fill="none"/><path d="M1378.1 176.5l4.2 -3.4l4.4 3.2l-3.6 4z" fill="#1c1ccc"/><path d="M1398.4 181l4.2 -3.4l4.4 3.2l-3.6 4z" fill="#1c1ccc"/><path d="M845 221.8L865 225.2" stroke="#1c1ccc" stroke-width="0.9" fill="none"/><path d="M840.6 221.6l4.2 -3.4l4.4 3.2l-3.6 4z" fill="#1c1ccc"/><path d="M860.6 225.1l4.2 -3.4l4.4 3.2l-3.6 4z" fill="#1c1ccc"/><path d="M1068.5 265L1089 269.5" stroke="#1c1ccc" stroke-width="0.9" fill="none"/><path d="M1064.1 264.8l4.2 -3.4l4.4 3.2l-3.6 4z" fill="#1c1ccc"/><path d="M1084.6 269.3l4.2 -3.4l4.4 3.2l-3.6 4z" fill="#1c1ccc"/><path d="M1109.8 261.6L1130.2 266.1" stroke="#1c1ccc" stroke-width="0.9" fill="none"/><path d="M1105.3 261.4l4.2 -3.4l4.4 3.2l-3.6 4z" fill="#1c1ccc"/><path d="M1125.8 265.9l4.2 -3.4l4.4 3.2l-3.6 4z" fill="#1c1ccc"/><path d="M1151 258.1L1171.5 262.6" stroke="#1c1ccc" stroke-width="0.9" fill="none"/><path d="M1146.6 257.9l4.2 -3.4l4.4 3.2l-3.6 4z" fill="#1c1ccc"/><path d="M1167.1 262.4l4.2 -3.4l4.4 3.2l-3.6 4z" fill="#1c1ccc"/><path d="M1192.2 254.7L1212.8 259.2" stroke="#1c1ccc" stroke-width="0.9" fill="none"/><path d="M1187.8 254.5l4.2 -3.4l4.4 3.2l-3.6 4z" fill="#1c1ccc"/><path d="M1208.3 259l4.2 -3.4l4.4 3.2l-3.6 4z" fill="#1c1ccc"/><path d="M1233.5 251.2L1254 255.7" stroke="#1c1ccc" stroke-width="0.9" fill="none"/><path d="M1229.1 251l4.2 -3.4l4.4 3.2l-3.6 4z" fill="#1c1ccc"/><path d="M1249.6 255.5l4.2 -3.4l4.4 3.2l-3.6 4z" fill="#1c1ccc"/><path d="M1274.8 247.8L1295.2 252.3" stroke="#1c1ccc" stroke-width="0.9" fill="none"/><path d="M1270.3 247.6l4.2 -3.4l4.4 3.2l-3.6 4z" fill="#1c1ccc"/><path d="M1290.8 252.1l4.2 -3.4l4.4 3.2l-3.6 4z" fill="#1c1ccc"/><path d="M1316 244.4L1336.5 248.9" stroke="#1c1ccc" stroke-width="0.9" fill="none"/><path d="M1311.6 244.2l4.2 -3.4l4.4 3.2l-3.6 4z" fill="#1c1ccc"/><path d="M1332.1 248.7l4.2 -3.4l4.4 3.2l-3.6 4z" fill="#1c1ccc"/><path d="M1357.2 240.9L1377.8 245.4" stroke="#1c1ccc" stroke-width="0.9" fill="none"/><path d="M1352.8 240.7l4.2 -3.4l4.4 3.2l-3.6 4z" fill="#1c1ccc"/><path d="M1373.3 245.2l4.2 -3.4l4.4 3.2l-3.6 4z" fill="#1c1ccc"/><path d="M1398.5 237.5L1419 242" stroke="#1c1ccc" stroke-width="0.9" fill="none"/><path d="M1394.1 237.3l4.2 -3.4l4.4 3.2l-3.6 4z" fill="#1c1ccc"/><path d="M1414.6 241.8l4.2 -3.4l4.4 3.2l-3.6 4z" fill="#1c1ccc"/><path d="M836 257.5L856 262.2" stroke="#1c1ccc" stroke-width="0.9" fill="none"/><path d="M831.6 257.3l4.2 -3.4l4.4 3.2l-3.6 4z" fill="#1c1ccc"/><path d="M851.6 262.1l4.2 -3.4l4.4 3.2l-3.6 4z" fill="#1c1ccc"/><path d="M837.5 303.8L857.5 308.5" stroke="#1c1ccc" stroke-width="0.9" fill="none"/><path d="M833.1 303.6l4.2 -3.4l4.4 3.2l-3.6 4z" fill="#1c1ccc"/><path d="M853.1 308.3l4.2 -3.4l4.4 3.2l-3.6 4z" fill="#1c1ccc"/><path d="M837.5 351L857.5 355.8" stroke="#1c1ccc" stroke-width="0.9" fill="none"/><path d="M833.1 350.8l4.2 -3.4l4.4 3.2l-3.6 4z" fill="#1c1ccc"/><path d="M853.1 355.6l4.2 -3.4l4.4 3.2l-3.6 4z" fill="#1c1ccc"/><path d="M838.5 398L858.5 402.8" stroke="#1c1ccc" stroke-width="0.9" fill="none"/><path d="M834.1 397.8l4.2 -3.4l4.4 3.2l-3.6 4z" fill="#1c1ccc"/><path d="M854.1 402.6l4.2 -3.4l4.4 3.2l-3.6 4z" fill="#1c1ccc"/><path d="M839 445L859 449.8" stroke="#1c1ccc" stroke-width="0.9" fill="none"/><path d="M834.6 444.8l4.2 -3.4l4.4 3.2l-3.6 4z" fill="#1c1ccc"/><path d="M854.6 449.6l4.2 -3.4l4.4 3.2l-3.6 4z" fill="#1c1ccc"/><path d="M1050 292.5L1070.3 296.8" stroke="#1c1ccc" stroke-width="0.9" fill="none"/><path d="M1045.6 292.3l4.2 -3.4l4.4 3.2l-3.6 4z" fill="#1c1ccc"/><path d="M1065.9 296.6l4.2 -3.4l4.4 3.2l-3.6 4z" fill="#1c1ccc"/><path d="M1050.8 338.8L1071 343.1" stroke="#1c1ccc" stroke-width="0.9" fill="none"/><path d="M1046.3 338.6l4.2 -3.4l4.4 3.2l-3.6 4z" fill="#1c1ccc"/><path d="M1066.6 342.9l4.2 -3.4l4.4 3.2l-3.6 4z" fill="#1c1ccc"/><path d="M1051 385.5L1071.3 389.8" stroke="#1c1ccc" stroke-width="0.9" fill="none"/><path d="M1046.6 385.3l4.2 -3.4l4.4 3.2l-3.6 4z" fill="#1c1ccc"/><path d="M1066.9 389.6l4.2 -3.4l4.4 3.2l-3.6 4z" fill="#1c1ccc"/><path d="M1052 432.5L1072.3 436.8" stroke="#1c1ccc" stroke-width="0.9" fill="none"/><path d="M1047.6 432.3l4.2 -3.4l4.4 3.2l-3.6 4z" fill="#1c1ccc"/><path d="M1067.9 436.6l4.2 -3.4l4.4 3.2l-3.6 4z" fill="#1c1ccc"/><path d="M1052.5 478.8L1072.8 483.1" stroke="#1c1ccc" stroke-width="0.9" fill="none"/><path d="M1048.1 478.6l4.2 -3.4l4.4 3.2l-3.6 4z" fill="#1c1ccc"/><path d="M1068.4 482.9l4.2 -3.4l4.4 3.2l-3.6 4z" fill="#1c1ccc"/><path d="M1072.2 501.2L1092.8 505.8" stroke="#1c1ccc" stroke-width="0.9" fill="none"/><path d="M1067.8 501.1l4.2 -3.4l4.4 3.2l-3.6 4z" fill="#1c1ccc"/><path d="M1088.3 505.6l4.2 -3.4l4.4 3.2l-3.6 4z" fill="#1c1ccc"/><path d="M1113.7 497.8L1134.2 502.3" stroke="#1c1ccc" stroke-width="0.9" fill="none"/><path d="M1109.2 497.6l4.2 -3.4l4.4 3.2l-3.6 4z" fill="#1c1ccc"/><path d="M1129.8 502.1l4.2 -3.4l4.4 3.2l-3.6 4z" fill="#1c1ccc"/><path d="M1155 494.4L1175.5 498.9" stroke="#1c1ccc" stroke-width="0.9" fill="none"/><path d="M1150.6 494.2l4.2 -3.4l4.4 3.2l-3.6 4z" fill="#1c1ccc"/><path d="M1171.1 498.7l4.2 -3.4l4.4 3.2l-3.6 4z" fill="#1c1ccc"/><path d="M1196.5 490.9L1217 495.4" stroke="#1c1ccc" stroke-width="0.9" fill="none"/><path d="M1192 490.7l4.2 -3.4l4.4 3.2l-3.6 4z" fill="#1c1ccc"/><path d="M1212.5 495.2l4.2 -3.4l4.4 3.2l-3.6 4z" fill="#1c1ccc"/><path d="M1237.8 487.5L1258.3 492" stroke="#1c1ccc" stroke-width="0.9" fill="none"/><path d="M1233.4 487.3l4.2 -3.4l4.4 3.2l-3.6 4z" fill="#1c1ccc"/><path d="M1253.9 491.8l4.2 -3.4l4.4 3.2l-3.6 4z" fill="#1c1ccc"/><path d="M1279.2 484.1L1299.8 488.6" stroke="#1c1ccc" stroke-width="0.9" fill="none"/><path d="M1274.8 483.9l4.2 -3.4l4.4 3.2l-3.6 4z" fill="#1c1ccc"/><path d="M1295.3 488.4l4.2 -3.4l4.4 3.2l-3.6 4z" fill="#1c1ccc"/><path d="M1320.7 480.6L1341.2 485.1" stroke="#1c1ccc" stroke-width="0.9" fill="none"/><path d="M1316.2 480.4l4.2 -3.4l4.4 3.2l-3.6 4z" fill="#1c1ccc"/><path d="M1336.8 484.9l4.2 -3.4l4.4 3.2l-3.6 4z" fill="#1c1ccc"/><path d="M1362 477.2L1382.5 481.7" stroke="#1c1ccc" stroke-width="0.9" fill="none"/><path d="M1357.6 477l4.2 -3.4l4.4 3.2l-3.6 4z" fill="#1c1ccc"/><path d="M1378.1 481.5l4.2 -3.4l4.4 3.2l-3.6 4z" fill="#1c1ccc"/><path d="M1403.5 473.7L1424 478.2" stroke="#1c1ccc" stroke-width="0.9" fill="none"/><path d="M1399 473.5l4.2 -3.4l4.4 3.2l-3.6 4z" fill="#1c1ccc"/><path d="M1419.5 478l4.2 -3.4l4.4 3.2l-3.6 4z" fill="#1c1ccc"/>
<path d="M814 234.3L863.5 230.3" stroke="#383a3e" stroke-width="3" fill="none"/><path d="M867.5 230L848.8 235L846.6 231.7L848.3 228z" fill="#383a3e"/><path d="M840.2 240.1L889.8 236.1" stroke="#383a3e" stroke-width="3" fill="none"/><path d="M893.8 235.8L875.1 240.8L872.8 237.4L874.5 233.8z" fill="#383a3e"/><path d="M865.2 245.6L914.8 241.6" stroke="#383a3e" stroke-width="3" fill="none"/><path d="M918.8 241.2L900.1 246.3L897.8 242.9L899.5 239.3z" fill="#383a3e"/><path d="M889 250.6L938.5 246.6" stroke="#383a3e" stroke-width="3" fill="none"/><path d="M942.5 246.2L923.8 251.3L921.6 247.9L923.3 244.3z" fill="#383a3e"/><path d="M914 255.6L963.5 251.6" stroke="#383a3e" stroke-width="3" fill="none"/><path d="M967.5 251.2L948.8 256.3L946.6 252.9L948.3 249.3z" fill="#383a3e"/><path d="M937.8 261.1L987.3 257.1" stroke="#383a3e" stroke-width="3" fill="none"/><path d="M991.2 256.8L972.6 261.8L970.3 258.4L972 254.8z" fill="#383a3e"/><path d="M962.8 266.3L1012.3 262.3" stroke="#383a3e" stroke-width="3" fill="none"/><path d="M1016.2 262L997.6 267L995.3 263.7L997 260z" fill="#383a3e"/><path d="M989 274.3L1038.5 270.3" stroke="#383a3e" stroke-width="3" fill="none"/><path d="M1042.5 270L1023.8 275L1021.6 271.7L1023.3 268z" fill="#383a3e"/><path d="M804.5 259.5L858 255.8" stroke="#383a3e" stroke-width="3" fill="none"/><path d="M862 255.5L843.3 260.3L841.1 257L842.8 253.3z" fill="#383a3e"/><path d="M804.5 311.5L858 307.8" stroke="#383a3e" stroke-width="3" fill="none"/><path d="M862 307.5L843.3 312.3L841.1 309L842.8 305.3z" fill="#383a3e"/><path d="M805 361.5L858.5 357.8" stroke="#383a3e" stroke-width="3" fill="none"/><path d="M862.5 357.5L843.8 362.3L841.6 359L843.3 355.3z" fill="#383a3e"/><path d="M806 412.8L859.5 409" stroke="#383a3e" stroke-width="3" fill="none"/><path d="M863.5 408.8L844.8 413.6L842.6 410.2L844.3 406.6z" fill="#383a3e"/><path d="M807 464L860.5 460.3" stroke="#383a3e" stroke-width="3" fill="none"/><path d="M864.5 460L845.8 464.8L843.6 461.5L845.3 457.8z" fill="#383a3e"/><path d="M986.2 325.2L1039.8 321.3" stroke="#383a3e" stroke-width="3" fill="none"/><path d="M1043.8 321L1025.1 325.9L1022.8 322.5L1024.5 318.9z" fill="#383a3e"/><path d="M987 376.2L1040.5 372.3" stroke="#383a3e" stroke-width="3" fill="none"/><path d="M1044.5 372L1025.8 376.9L1023.6 373.5L1025.3 369.9z" fill="#383a3e"/><path d="M988 427.9L1041.5 424" stroke="#383a3e" stroke-width="3" fill="none"/><path d="M1045.5 423.8L1026.8 428.6L1024.6 425.3L1026.3 421.6z" fill="#383a3e"/><path d="M988.5 479.2L1042 475.3" stroke="#383a3e" stroke-width="3" fill="none"/><path d="M1046 475L1027.3 479.9L1025.1 476.5L1026.8 472.9z" fill="#383a3e"/>
<path d="M884.5 164.2L885.1 217" stroke="#1c1ccc" stroke-width="1.1" fill="none"/><path d="M884.5 161.2l1.1 4.4l1.5 3l1.2 5.1h-7.6l1.2 -5.1l1.5 -3z" fill="#1c1ccc"/><path d="M885.1 220l1.1 -4.4l1.5 -3l1.2 -5.1h-7.6l1.2 5.1l1.5 3z" fill="#1c1ccc"/><path d="M928.5 160.5L929.1 214" stroke="#1c1ccc" stroke-width="1.1" fill="none"/><path d="M928.5 157.5l1.1 4.4l1.5 3l1.2 5.1h-7.6l1.2 -5.1l1.5 -3z" fill="#1c1ccc"/><path d="M929.1 217l1.1 -4.4l1.5 -3l1.2 -5.1h-7.6l1.2 5.1l1.5 3z" fill="#1c1ccc"/><path d="M972.6 156.8L973.2 211" stroke="#1c1ccc" stroke-width="1.1" fill="none"/><path d="M972.6 153.8l1.1 4.4l1.5 3l1.2 5.1h-7.6l1.2 -5.1l1.5 -3z" fill="#1c1ccc"/><path d="M973.2 214l1.1 -4.4l1.5 -3l1.2 -5.1h-7.6l1.2 5.1l1.5 3z" fill="#1c1ccc"/><path d="M1016.6 153.1L1017.2 208" stroke="#1c1ccc" stroke-width="1.1" fill="none"/><path d="M1016.6 150.1l1.1 4.4l1.5 3l1.2 5.1h-7.6l1.2 -5.1l1.5 -3z" fill="#1c1ccc"/><path d="M1017.2 211l1.1 -4.4l1.5 -3l1.2 -5.1h-7.6l1.2 5.1l1.5 3z" fill="#1c1ccc"/><path d="M1060.6 149.4L1061.2 205" stroke="#1c1ccc" stroke-width="1.1" fill="none"/><path d="M1060.6 146.4l1.1 4.4l1.5 3l1.2 5.1h-7.6l1.2 -5.1l1.5 -3z" fill="#1c1ccc"/><path d="M1061.2 208l1.1 -4.4l1.5 -3l1.2 -5.1h-7.6l1.2 5.1l1.5 3z" fill="#1c1ccc"/><path d="M1104.7 145.7L1105.2 202" stroke="#1c1ccc" stroke-width="1.1" fill="none"/><path d="M1104.7 142.7l1.1 4.4l1.5 3l1.2 5.1h-7.6l1.2 -5.1l1.5 -3z" fill="#1c1ccc"/><path d="M1105.2 205l1.1 -4.4l1.5 -3l1.2 -5.1h-7.6l1.2 5.1l1.5 3z" fill="#1c1ccc"/><path d="M1148.7 142L1149.3 199" stroke="#1c1ccc" stroke-width="1.1" fill="none"/><path d="M1148.7 139l1.1 4.4l1.5 3l1.2 5.1h-7.6l1.2 -5.1l1.5 -3z" fill="#1c1ccc"/><path d="M1149.3 202l1.1 -4.4l1.5 -3l1.2 -5.1h-7.6l1.2 5.1l1.5 3z" fill="#1c1ccc"/><path d="M1192.7 138.3L1193.3 196" stroke="#1c1ccc" stroke-width="1.1" fill="none"/><path d="M1192.7 135.3l1.1 4.4l1.5 3l1.2 5.1h-7.6l1.2 -5.1l1.5 -3z" fill="#1c1ccc"/><path d="M1193.3 199l1.1 -4.4l1.5 -3l1.2 -5.1h-7.6l1.2 5.1l1.5 3z" fill="#1c1ccc"/><path d="M1236.7 134.6L1237.3 193" stroke="#1c1ccc" stroke-width="1.1" fill="none"/><path d="M1236.7 131.6l1.1 4.4l1.5 3l1.2 5.1h-7.6l1.2 -5.1l1.5 -3z" fill="#1c1ccc"/><path d="M1237.3 196l1.1 -4.4l1.5 -3l1.2 -5.1h-7.6l1.2 5.1l1.5 3z" fill="#1c1ccc"/><path d="M1280.8 130.9L1281.4 190" stroke="#1c1ccc" stroke-width="1.1" fill="none"/><path d="M1280.8 127.9l1.1 4.4l1.5 3l1.2 5.1h-7.6l1.2 -5.1l1.5 -3z" fill="#1c1ccc"/><path d="M1281.4 193l1.1 -4.4l1.5 -3l1.2 -5.1h-7.6l1.2 5.1l1.5 3z" fill="#1c1ccc"/><path d="M1324.8 127.2L1325.4 187" stroke="#1c1ccc" stroke-width="1.1" fill="none"/><path d="M1324.8 124.2l1.1 4.4l1.5 3l1.2 5.1h-7.6l1.2 -5.1l1.5 -3z" fill="#1c1ccc"/><path d="M1325.4 190l1.1 -4.4l1.5 -3l1.2 -5.1h-7.6l1.2 5.1l1.5 3z" fill="#1c1ccc"/><path d="M1368.8 123.4L1369.4 184" stroke="#1c1ccc" stroke-width="1.1" fill="none"/><path d="M1368.8 120.4l1.1 4.4l1.5 3l1.2 5.1h-7.6l1.2 -5.1l1.5 -3z" fill="#1c1ccc"/><path d="M1369.4 187l1.1 -4.4l1.5 -3l1.2 -5.1h-7.6l1.2 5.1l1.5 3z" fill="#1c1ccc"/><path d="M1412.9 119.7L1413.5 181" stroke="#1c1ccc" stroke-width="1.1" fill="none"/><path d="M1412.9 116.7l1.1 4.4l1.5 3l1.2 5.1h-7.6l1.2 -5.1l1.5 -3z" fill="#1c1ccc"/><path d="M1413.5 184l1.1 -4.4l1.5 -3l1.2 -5.1h-7.6l1.2 5.1l1.5 3z" fill="#1c1ccc"/><path d="M871.2 168.5L871.9 219.5" stroke="#1c1ccc" stroke-width="1.1" fill="none"/><path d="M871.2 165.5l1.1 4.4l1.5 3l1.2 5.1h-7.6l1.2 -5.1l1.5 -3z" fill="#1c1ccc"/><path d="M871.9 222.5l1.1 -4.4l1.5 -3l1.2 -5.1h-7.6l1.2 5.1l1.5 3z" fill="#1c1ccc"/><path d="M895.2 173.5L895.9 224.9" stroke="#1c1ccc" stroke-width="1.1" fill="none"/><path d="M895.2 170.5l1.1 4.4l1.5 3l1.2 5.1h-7.6l1.2 -5.1l1.5 -3z" fill="#1c1ccc"/><path d="M895.9 227.9l1.1 -4.4l1.5 -3l1.2 -5.1h-7.6l1.2 5.1l1.5 3z" fill="#1c1ccc"/><path d="M919.2 178.5L919.9 230.3" stroke="#1c1ccc" stroke-width="1.1" fill="none"/><path d="M919.2 175.5l1.1 4.4l1.5 3l1.2 5.1h-7.6l1.2 -5.1l1.5 -3z" fill="#1c1ccc"/><path d="M919.9 233.3l1.1 -4.4l1.5 -3l1.2 -5.1h-7.6l1.2 5.1l1.5 3z" fill="#1c1ccc"/><path d="M943.2 183.5L943.9 235.7" stroke="#1c1ccc" stroke-width="1.1" fill="none"/><path d="M943.2 180.5l1.1 4.4l1.5 3l1.2 5.1h-7.6l1.2 -5.1l1.5 -3z" fill="#1c1ccc"/><path d="M943.9 238.7l1.1 -4.4l1.5 -3l1.2 -5.1h-7.6l1.2 5.1l1.5 3z" fill="#1c1ccc"/><path d="M967.2 188.5L967.9 241.1" stroke="#1c1ccc" stroke-width="1.1" fill="none"/><path d="M967.2 185.5l1.1 4.4l1.5 3l1.2 5.1h-7.6l1.2 -5.1l1.5 -3z" fill="#1c1ccc"/><path d="M967.9 244.1l1.1 -4.4l1.5 -3l1.2 -5.1h-7.6l1.2 5.1l1.5 3z" fill="#1c1ccc"/><path d="M991.2 193.5L991.9 246.5" stroke="#1c1ccc" stroke-width="1.1" fill="none"/><path d="M991.2 190.5l1.1 4.4l1.5 3l1.2 5.1h-7.6l1.2 -5.1l1.5 -3z" fill="#1c1ccc"/><path d="M991.9 249.5l1.1 -4.4l1.5 -3l1.2 -5.1h-7.6l1.2 5.1l1.5 3z" fill="#1c1ccc"/><path d="M1015.2 198.5L1015.9 251.9" stroke="#1c1ccc" stroke-width="1.1" fill="none"/><path d="M1015.2 195.5l1.1 4.4l1.5 3l1.2 5.1h-7.6l1.2 -5.1l1.5 -3z" fill="#1c1ccc"/><path d="M1015.9 254.9l1.1 -4.4l1.5 -3l1.2 -5.1h-7.6l1.2 5.1l1.5 3z" fill="#1c1ccc"/><path d="M1039.2 203.5L1039.8 257.3" stroke="#1c1ccc" stroke-width="1.1" fill="none"/><path d="M1039.2 200.5l1.1 4.4l1.5 3l1.2 5.1h-7.6l1.2 -5.1l1.5 -3z" fill="#1c1ccc"/><path d="M1039.8 260.3l1.1 -4.4l1.5 -3l1.2 -5.1h-7.6l1.2 5.1l1.5 3z" fill="#1c1ccc"/><path d="M1079.2 201.8L1080.2 258.2" stroke="#1c1ccc" stroke-width="1.1" fill="none"/><path d="M1079.2 198.8l1.1 4.4l1.5 3l1.2 5.1h-7.6l1.2 -5.1l1.5 -3z" fill="#1c1ccc"/><path d="M1080.2 261.2l1.1 -4.4l1.5 -3l1.2 -5.1h-7.6l1.2 5.1l1.5 3z" fill="#1c1ccc"/><path d="M1123.3 198.2L1124.3 254.6" stroke="#1c1ccc" stroke-width="1.1" fill="none"/><path d="M1123.3 195.2l1.1 4.4l1.5 3l1.2 5.1h-7.6l1.2 -5.1l1.5 -3z" fill="#1c1ccc"/><path d="M1124.3 257.6l1.1 -4.4l1.5 -3l1.2 -5.1h-7.6l1.2 5.1l1.5 3z" fill="#1c1ccc"/><path d="M1167.4 194.6L1168.4 251.1" stroke="#1c1ccc" stroke-width="1.1" fill="none"/><path d="M1167.4 191.6l1.1 4.4l1.5 3l1.2 5.1h-7.6l1.2 -5.1l1.5 -3z" fill="#1c1ccc"/><path d="M1168.4 254.1l1.1 -4.4l1.5 -3l1.2 -5.1h-7.6l1.2 5.1l1.5 3z" fill="#1c1ccc"/><path d="M1211.5 191L1212.5 247.4" stroke="#1c1ccc" stroke-width="1.1" fill="none"/><path d="M1211.5 188l1.1 4.4l1.5 3l1.2 5.1h-7.6l1.2 -5.1l1.5 -3z" fill="#1c1ccc"/><path d="M1212.5 250.4l1.1 -4.4l1.5 -3l1.2 -5.1h-7.6l1.2 5.1l1.5 3z" fill="#1c1ccc"/><path d="M1255.5 187.5L1256.5 243.8" stroke="#1c1ccc" stroke-width="1.1" fill="none"/><path d="M1255.5 184.5l1.1 4.4l1.5 3l1.2 5.1h-7.6l1.2 -5.1l1.5 -3z" fill="#1c1ccc"/><path d="M1256.5 246.8l1.1 -4.4l1.5 -3l1.2 -5.1h-7.6l1.2 5.1l1.5 3z" fill="#1c1ccc"/><path d="M1299.6 183.9L1300.6 240.2" stroke="#1c1ccc" stroke-width="1.1" fill="none"/><path d="M1299.6 180.9l1.1 4.4l1.5 3l1.2 5.1h-7.6l1.2 -5.1l1.5 -3z" fill="#1c1ccc"/><path d="M1300.6 243.2l1.1 -4.4l1.5 -3l1.2 -5.1h-7.6l1.2 5.1l1.5 3z" fill="#1c1ccc"/><path d="M1343.7 180.3L1344.7 236.7" stroke="#1c1ccc" stroke-width="1.1" fill="none"/><path d="M1343.7 177.3l1.1 4.4l1.5 3l1.2 5.1h-7.6l1.2 -5.1l1.5 -3z" fill="#1c1ccc"/><path d="M1344.7 239.7l1.1 -4.4l1.5 -3l1.2 -5.1h-7.6l1.2 5.1l1.5 3z" fill="#1c1ccc"/><path d="M1387.7 176.8L1388.7 233.1" stroke="#1c1ccc" stroke-width="1.1" fill="none"/><path d="M1387.7 173.8l1.1 4.4l1.5 3l1.2 5.1h-7.6l1.2 -5.1l1.5 -3z" fill="#1c1ccc"/><path d="M1388.7 236.1l1.1 -4.4l1.5 -3l1.2 -5.1h-7.6l1.2 5.1l1.5 3z" fill="#1c1ccc"/><path d="M881.2 474.2L881.9 528.2" stroke="#1c1ccc" stroke-width="1.1" fill="none"/><path d="M881.2 471.2l1.1 4.4l1.5 3l1.2 5.1h-7.6l1.2 -5.1l1.5 -3z" fill="#1c1ccc"/><path d="M881.9 531.2l1.1 -4.4l1.5 -3l1.2 -5.1h-7.6l1.2 5.1l1.5 3z" fill="#1c1ccc"/><path d="M905.5 479.6L906.1 533.2" stroke="#1c1ccc" stroke-width="1.1" fill="none"/><path d="M905.5 476.6l1.1 4.4l1.5 3l1.2 5.1h-7.6l1.2 -5.1l1.5 -3z" fill="#1c1ccc"/><path d="M906.1 536.2l1.1 -4.4l1.5 -3l1.2 -5.1h-7.6l1.2 5.1l1.5 3z" fill="#1c1ccc"/><path d="M929.6 484.9L930.2 538.2" stroke="#1c1ccc" stroke-width="1.1" fill="none"/><path d="M929.6 481.9l1.1 4.4l1.5 3l1.2 5.1h-7.6l1.2 -5.1l1.5 -3z" fill="#1c1ccc"/><path d="M930.2 541.2l1.1 -4.4l1.5 -3l1.2 -5.1h-7.6l1.2 5.1l1.5 3z" fill="#1c1ccc"/><path d="M953.9 490.1L954.5 543.2" stroke="#1c1ccc" stroke-width="1.1" fill="none"/><path d="M953.9 487.1l1.1 4.4l1.5 3l1.2 5.1h-7.6l1.2 -5.1l1.5 -3z" fill="#1c1ccc"/><path d="M954.5 546.2l1.1 -4.4l1.5 -3l1.2 -5.1h-7.6l1.2 5.1l1.5 3z" fill="#1c1ccc"/><path d="M978 495.4L978.6 548.2" stroke="#1c1ccc" stroke-width="1.1" fill="none"/><path d="M978 492.4l1.1 4.4l1.5 3l1.2 5.1h-7.6l1.2 -5.1l1.5 -3z" fill="#1c1ccc"/><path d="M978.6 551.2l1.1 -4.4l1.5 -3l1.2 -5.1h-7.6l1.2 5.1l1.5 3z" fill="#1c1ccc"/><path d="M1002.2 500.8L1002.9 553.2" stroke="#1c1ccc" stroke-width="1.1" fill="none"/><path d="M1002.2 497.8l1.1 4.4l1.5 3l1.2 5.1h-7.6l1.2 -5.1l1.5 -3z" fill="#1c1ccc"/><path d="M1002.9 556.2l1.1 -4.4l1.5 -3l1.2 -5.1h-7.6l1.2 5.1l1.5 3z" fill="#1c1ccc"/><path d="M1026.5 506.1L1027 558.2" stroke="#1c1ccc" stroke-width="1.1" fill="none"/><path d="M1026.5 503.1l1.1 4.4l1.5 3l1.2 5.1h-7.6l1.2 -5.1l1.5 -3z" fill="#1c1ccc"/><path d="M1027 561.2l1.1 -4.4l1.5 -3l1.2 -5.1h-7.6l1.2 5.1l1.5 3z" fill="#1c1ccc"/><path d="M1051.8 506.8L1052.3 562.5" stroke="#1c1ccc" stroke-width="1.1" fill="none"/><path d="M1051.8 503.8l1.1 4.4l1.5 3l1.2 5.1h-7.6l1.2 -5.1l1.5 -3z" fill="#1c1ccc"/><path d="M1052.3 565.5l1.1 -4.4l1.5 -3l1.2 -5.1h-7.6l1.2 5.1l1.5 3z" fill="#1c1ccc"/><path d="M1096 508L1096.6 559.5" stroke="#1c1ccc" stroke-width="1.1" fill="none"/><path d="M1096 505l1.1 4.4l1.5 3l1.2 5.1h-7.6l1.2 -5.1l1.5 -3z" fill="#1c1ccc"/><path d="M1096.6 562.5l1.1 -4.4l1.5 -3l1.2 -5.1h-7.6l1.2 5.1l1.5 3z" fill="#1c1ccc"/><path d="M1140 504.1L1140.6 555.9" stroke="#1c1ccc" stroke-width="1.1" fill="none"/><path d="M1140 501.1l1.1 4.4l1.5 3l1.2 5.1h-7.6l1.2 -5.1l1.5 -3z" fill="#1c1ccc"/><path d="M1140.6 558.9l1.1 -4.4l1.5 -3l1.2 -5.1h-7.6l1.2 5.1l1.5 3z" fill="#1c1ccc"/><path d="M1184 500.3L1184.6 552.2" stroke="#1c1ccc" stroke-width="1.1" fill="none"/><path d="M1184 497.3l1.1 4.4l1.5 3l1.2 5.1h-7.6l1.2 -5.1l1.5 -3z" fill="#1c1ccc"/><path d="M1184.6 555.2l1.1 -4.4l1.5 -3l1.2 -5.1h-7.6l1.2 5.1l1.5 3z" fill="#1c1ccc"/><path d="M1228 496.4L1228.6 548.6" stroke="#1c1ccc" stroke-width="1.1" fill="none"/><path d="M1228 493.4l1.1 4.4l1.5 3l1.2 5.1h-7.6l1.2 -5.1l1.5 -3z" fill="#1c1ccc"/><path d="M1228.6 551.6l1.1 -4.4l1.5 -3l1.2 -5.1h-7.6l1.2 5.1l1.5 3z" fill="#1c1ccc"/><path d="M1272 492.6L1272.6 544.9" stroke="#1c1ccc" stroke-width="1.1" fill="none"/><path d="M1272 489.6l1.1 4.4l1.5 3l1.2 5.1h-7.6l1.2 -5.1l1.5 -3z" fill="#1c1ccc"/><path d="M1272.6 547.9l1.1 -4.4l1.5 -3l1.2 -5.1h-7.6l1.2 5.1l1.5 3z" fill="#1c1ccc"/><path d="M1316 488.7L1316.6 541.3" stroke="#1c1ccc" stroke-width="1.1" fill="none"/><path d="M1316 485.7l1.1 4.4l1.5 3l1.2 5.1h-7.6l1.2 -5.1l1.5 -3z" fill="#1c1ccc"/><path d="M1316.6 544.3l1.1 -4.4l1.5 -3l1.2 -5.1h-7.6l1.2 5.1l1.5 3z" fill="#1c1ccc"/><path d="M1360 484.8L1360.6 537.7" stroke="#1c1ccc" stroke-width="1.1" fill="none"/><path d="M1360 481.8l1.1 4.4l1.5 3l1.2 5.1h-7.6l1.2 -5.1l1.5 -3z" fill="#1c1ccc"/><path d="M1360.6 540.7l1.1 -4.4l1.5 -3l1.2 -5.1h-7.6l1.2 5.1l1.5 3z" fill="#1c1ccc"/><path d="M1404 481L1404.6 534" stroke="#1c1ccc" stroke-width="1.1" fill="none"/><path d="M1404 478l1.1 4.4l1.5 3l1.2 5.1h-7.6l1.2 -5.1l1.5 -3z" fill="#1c1ccc"/><path d="M1404.6 537l1.1 -4.4l1.5 -3l1.2 -5.1h-7.6l1.2 5.1l1.5 3z" fill="#1c1ccc"/><path d="M830 473L876 469.1" stroke="#383a3e" stroke-width="3" fill="none"/><path d="M880 468.8L861.4 473.8L859.1 470.5L860.8 466.9z" fill="#383a3e"/><path d="M855 478.8L901 474.1" stroke="#383a3e" stroke-width="3" fill="none"/><path d="M905 473.8L886.4 479.1L884.1 475.8L885.7 472.2z" fill="#383a3e"/><path d="M880 483.8L926 480.3" stroke="#383a3e" stroke-width="3" fill="none"/><path d="M930 480L911.3 484.9L909.1 481.6L910.8 477.9z" fill="#383a3e"/><path d="M905 488L951 485.2" stroke="#383a3e" stroke-width="3" fill="none"/><path d="M955 485L936.2 489.6L934 486.3L935.8 482.6z" fill="#383a3e"/><path d="M929.2 493.8L976 490.3" stroke="#383a3e" stroke-width="3" fill="none"/><path d="M980 490L961.3 494.9L959.1 491.5L960.8 487.9z" fill="#383a3e"/><path d="M953.8 498.8L1001 495.3" stroke="#383a3e" stroke-width="3" fill="none"/><path d="M1005 495L986.3 499.9L984.1 496.5L985.8 492.9z" fill="#383a3e"/><path d="M978.8 503.8L1028.5 500.3" stroke="#383a3e" stroke-width="3" fill="none"/><path d="M1032.5 500L1013.8 504.8L1011.6 501.5L1013.3 497.8z" fill="#383a3e"/><path d="M807 464.5L860.5 460.3" stroke="#383a3e" stroke-width="3" fill="none"/><path d="M864.5 460L845.8 465L843.6 461.6L845.3 458z" fill="#383a3e"/>
<path d="M1295.4 276 L1335 272.5 A28 60 0 0 1 1335 392.5 L1295.4 396 z" fill="#4fd24f"/><ellipse cx="1335" cy="332.5" rx="28" ry="60" fill="#4fd24f"/><ellipse cx="1295.4" cy="336" rx="28" ry="60" fill="#50d250"/><path d="M1295.4 276 A28 60 0 0 1 1295.4 396" fill="none" stroke="#1d6a1d" stroke-width="0.8" stroke-dasharray="1.5 1.2"/><path d="M1335 272.5 A28 60 0 0 1 1335 392.5" fill="none" stroke="#2a8a2a" stroke-width="0.8" stroke-dasharray="1.5 1.2"/><ellipse cx="1294.8" cy="336" rx="29.6" ry="61.6" fill="none" stroke="#6f9a72" stroke-width="2.4" stroke-dasharray="1.3 17.5"/><path d="M1336 271 A29.5 61.5 0 0 1 1336 394" fill="none" stroke="#6f9a72" stroke-width="2.4" stroke-dasharray="1.3 17.5"/><g opacity="0.88"><path d="M1311.5 236h4v40h-4z" fill="#48cc48"/><path d="M1313.5 197.5L1315 212L1319.6 238h-12.2L1312 212z" fill="url(#gy)"/></g><path d="M1295.5 333.6L1296 338.6L1231 343.5L1231 340z" fill="#5252cc"/><path d="M1193.5 344.5L1229 334.5L1231.5 348z" fill="#5a5ad0"/><path d="M1326 341.3h17" stroke="#2a6a2a" stroke-width="0.8" stroke-dasharray="1.5 1.2"/><path d="M1343 340.5L1364 338L1382.5 348L1362.5 351.5L1352 345z" fill="#c4524a"/><path d="M1343 340.5L1364 338L1368 344z" fill="#a84038"/>
<text x="1179" y="350.5" font-size="11" fill="#8080c4" font-family="Liberation Sans, sans-serif">Z</text>
<text x="1388.5" y="354.5" font-size="11" fill="#d48484" font-family="Liberation Sans, sans-serif">X</text>
<text x="1312" y="186" font-size="10" fill="#3fd83f" font-family="Liberation Sans, sans-serif">Y</text>
<rect x="1137" y="577.5" width="290" height="10" fill="#fff" stroke="#000" stroke-width="1"/><rect x="1137" y="577" width="89" height="11" fill="#000"/><rect x="1315" y="577" width="89" height="11" fill="#000"/>
<text x="1137" y="572" font-size="13.5" text-anchor="middle" fill="#000" font-family="Liberation Sans, sans-serif">0</text><text x="1315" y="572" font-size="13.5" text-anchor="middle" fill="#000" font-family="Liberation Sans, sans-serif">0.150</text><text x="1226" y="602" font-size="13.5" text-anchor="middle" fill="#000" font-family="Liberation Sans, sans-serif">0.075</text><text x="1404" y="602" font-size="13.5" text-anchor="middle" fill="#000" font-family="Liberation Sans, sans-serif">0.225</text>
<rect x="1160.2" y="156" width="240" height="260" fill="none" stroke="#ee1111" stroke-width="4"/>
</svg><!--/SVG3D-->
<div class="a" style="left:716px;top:628px;width:710px;height:180px;border:1px solid #6e6e6e;background:#fff"></div>
</div>
</body></html>
